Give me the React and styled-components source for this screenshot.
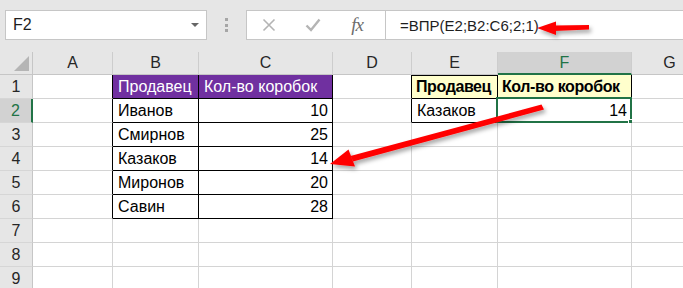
import React from "react";
import styled, { createGlobalStyle, css } from "styled-components";

const GREEN = "#217346";
const GRID = "#d4d4d4";
const CELL_FONT = `"Liberation Sans", Arial, sans-serif`;

const GlobalStyle = createGlobalStyle`
  body {
    margin: 0;
    background: #e6e6e6;
    font-family: ${CELL_FONT};
  }
`;

const Page = styled.div`
  position: relative;
  width: 683px;
  height: 288px;
  overflow: hidden;
  background: #e6e6e6;
`;

// Formula bar

const Toolbar = styled.div`
  display: flex;
  align-items: flex-start;
  height: 52px;
  padding: 10px 0 0 5px;
  box-sizing: border-box;
  margin-right: -6px;
`;

const NameBox = styled.div`
  display: flex;
  align-items: center;
  justify-content: space-between;
  width: 202px;
  height: 30px;
  box-sizing: border-box;
  padding: 0 7px 0 7px;
  background: #fff;
  border: 1px solid #c6c6c6;
  font-size: 16px;
  color: #1e1e1e;
`;

const Caret = styled.span`
  width: 0;
  height: 0;
  border-left: 4px solid transparent;
  border-right: 4px solid transparent;
  border-top: 4px solid #666;
`;

const Grip = styled.div`
  display: flex;
  flex-direction: column;
  align-items: center;
  justify-content: center;
  gap: 2.5px;
  width: 39px;
  height: 30px;
`;

const GripDot = styled.span`
  width: 3px;
  height: 3px;
  background: #a6a6a6;
`;

const ButtonBox = styled.div`
  display: flex;
  align-items: center;
  width: 139px;
  height: 30px;
  box-sizing: border-box;
  background: #fff;
  border: 1px solid #c6c6c6;
  border-right: none;
`;

const BarButton = styled.span`
  display: flex;
  align-items: center;
  justify-content: center;
  width: 44px;
  height: 28px;
  color: ${(p) => p.$color || "#b4b4b4"};
`;

const FxLabel = styled.span`
  font-family: "Liberation Serif", "Times New Roman", serif;
  font-style: italic;
  font-size: 19px;
  color: #6d6d6d;
  letter-spacing: -1px;
`;

const FormulaBox = styled.div`
  flex: 1;
  display: flex;
  align-items: center;
  height: 30px;
  box-sizing: border-box;
  padding-left: 14px;
  background: #fff;
  border: 1px solid #c6c6c6;
  font-size: 15px;
  color: #1e1e1e;
`;

// Sheet grid

const Sheet = styled.div`
  display: grid;
  grid-template-columns: 33px 80px 86px 134px 79px 86px 134px 76px;
  grid-template-rows: 23px repeat(9, 24px);
  background: #fff;
`;

const Corner = styled.div`
  position: relative;
  background: #e6e6e6;
  border-right: 1px solid #c6c6c6;
  border-bottom: 1px solid #c6c6c6;

  &::after {
    content: "";
    position: absolute;
    right: 3px;
    bottom: 3px;
    width: 0;
    height: 0;
    border-left: 15px solid transparent;
    border-bottom: 15px solid #b5b5b5;
  }
`;

const ColHeader = styled.div`
  display: flex;
  align-items: center;
  justify-content: center;
  box-sizing: border-box;
  background: #e6e6e6;
  border-right: 1px solid #cdcdcd;
  border-bottom: 1px solid #c6c6c6;
  font-size: 16px;
  color: #262626;

  ${(p) =>
    p.$selected &&
    css`
      background: #d2d2d2;
      color: ${GREEN};
      border-bottom: 2px solid ${GREEN};
    `}
`;

const RowHeader = styled.div`
  display: flex;
  align-items: center;
  justify-content: center;
  box-sizing: border-box;
  background: #e6e6e6;
  border-right: 1px solid #c6c6c6;
  border-bottom: 1px solid #d6d6d6;
  font-size: 16px;
  color: #262626;

  ${(p) =>
    p.$selected &&
    css`
      background: #d2d2d2;
      color: ${GREEN};
      border-right: 2px solid ${GREEN};
    `}
`;

const Cell = styled.div`
  position: relative;
  display: flex;
  align-items: center;
  justify-content: ${(p) => (p.$align === "right" ? "flex-end" : "flex-start")};
  box-sizing: border-box;
  padding: 1px 4px 0 ${(p) => (p.$bold ? 4 : 5)}px;
  background: ${(p) => p.$fill || "#fff"};
  border-right: 1px solid ${(p) => (p.$rb ? "#000" : GRID)};
  border-bottom: 1px solid ${(p) => (p.$bb ? "#000" : GRID)};
  font-size: 16px;
  font-weight: ${(p) => (p.$bold ? 700 : 400)};
  letter-spacing: ${(p) => (p.$bold ? "-0.4px" : "normal")};
  color: ${(p) => p.$color || "#000"};
  white-space: nowrap;

  ${(p) =>
    p.$tb &&
    css`
      box-shadow: inset 0 1px 0 #000;
    `}
`;

const SelectionFrame = styled.span`
  position: absolute;
  top: -2px;
  left: -2px;
  right: -1px;
  bottom: -1px;
  border: 2px solid ${GREEN};
  pointer-events: none;
`;

const FillHandle = styled.span`
  position: absolute;
  right: -5px;
  bottom: -5px;
  width: 5px;
  height: 5px;
  background: ${GREEN};
  border: 1px solid #fff;
`;

const ArrowLayer = styled.svg`
  position: absolute;
  top: 0;
  left: 0;
  pointer-events: none;
`;

const columns = ["A", "B", "C", "D", "E", "F", "G"];

const PURPLE = "#7030a0";
const YELLOW = "#ffffcc";

const sellers = [
  ["Иванов", 10],
  ["Смирнов", 25],
  ["Казаков", 14],
  ["Миронов", 20],
  ["Савин", 28],
];

// builds the cell props for each row of the sheet
const buildRows = () => {
  const rows = [];
  for (let r = 1; r <= 9; r++) {
    const cells = columns.map(() => ({ text: "" }));
    if (r <= 6) {
      cells[0].rb = true;
      cells[1].rb = true;
      cells[1].bb = true;
      cells[2].rb = true;
      cells[2].bb = true;
    }
    if (r === 1) {
      cells[1] = { ...cells[1], text: "Продавец", fill: PURPLE, color: "#fff" };
      cells[2] = { ...cells[2], text: "Кол-во коробок", fill: PURPLE, color: "#fff" };
      cells[3].rb = true;
      cells[4] = { text: "Продавец", fill: YELLOW, bold: true, rb: true, bb: true, tb: true };
      cells[5] = { text: "Кол-во коробок", fill: YELLOW, bold: true, rb: true, bb: true };
    } else if (r <= 6) {
      const [name, count] = sellers[r - 2];
      cells[1].text = name;
      cells[2].text = count;
      cells[2].align = "right";
    }
    if (r === 2) {
      cells[3].rb = true;
      cells[4] = { text: "Казаков", rb: true, bb: true };
      cells[5] = { text: 14, align: "right", rb: true, bb: true, selected: true };
    }
    rows.push(cells);
  }
  return rows;
};

const CrossIcon = () => (
  <svg width="14" height="14" viewBox="0 0 14 14">
    <path d="M1.5 1.5 L12.5 12.5 M12.5 1.5 L1.5 12.5" stroke="currentColor" strokeWidth="1.6" fill="none" />
  </svg>
);

const CheckIcon = () => (
  <svg width="16" height="14" viewBox="0 0 16 14">
    <path d="M1.5 7.5 L6 12 L14.5 1.5" stroke="currentColor" strokeWidth="2.4" fill="none" />
  </svg>
);

const Arrows = () => (
  <ArrowLayer width="683" height="288" viewBox="0 0 683 288">
    <defs>
      <filter id="arrowShadow" x="-20%" y="-50%" width="140%" height="200%">
        <feDropShadow dx="2" dy="3" stdDeviation="2" floodColor="#000" floodOpacity="0.35" />
      </filter>
    </defs>
    <g filter="url(#arrowShadow)" fill="#ff0000">
      <polygon points="589,25 589,29.5 554,31 554,25.5" />
      <polygon points="537,28 556,21.5 556,35" />
      <polygon points="541.5,104.5 544,109.5 353,161.5 350.5,156" />
      <polygon points="330,164 348.5,149.5 355,166.5" />
    </g>
  </ArrowLayer>
);

export default function App() {
  const rows = buildRows();
  return (
    <Page>
      <GlobalStyle />
      <Toolbar>
        <NameBox>
          F2
          <Caret />
        </NameBox>
        <Grip>
          <GripDot />
          <GripDot />
          <GripDot />
        </Grip>
        <ButtonBox>
          <BarButton>
            <CrossIcon />
          </BarButton>
          <BarButton>
            <CheckIcon />
          </BarButton>
          <BarButton>
            <FxLabel>fx</FxLabel>
          </BarButton>
        </ButtonBox>
        <FormulaBox>=ВПР(E2;B2:C6;2;1)</FormulaBox>
      </Toolbar>
      <Sheet>
        <Corner />
        {columns.map((c) => (
          <ColHeader key={c} $selected={c === "F"}>
            {c}
          </ColHeader>
        ))}
        {rows.map((cells, i) => (
          <React.Fragment key={i}>
            <RowHeader $selected={i === 1}>{i + 1}</RowHeader>
            {cells.map((cell, j) => (
              <Cell
                key={j}
                $fill={cell.fill}
                $color={cell.color}
                $bold={cell.bold}
                $align={cell.align}
                $rb={cell.rb}
                $bb={cell.bb}
                $tb={cell.tb}
              >
                {cell.text}
                {cell.selected && (
                  <SelectionFrame>
                    <FillHandle />
                  </SelectionFrame>
                )}
              </Cell>
            ))}
          </React.Fragment>
        ))}
      </Sheet>
      <Arrows />
    </Page>
  );
}
